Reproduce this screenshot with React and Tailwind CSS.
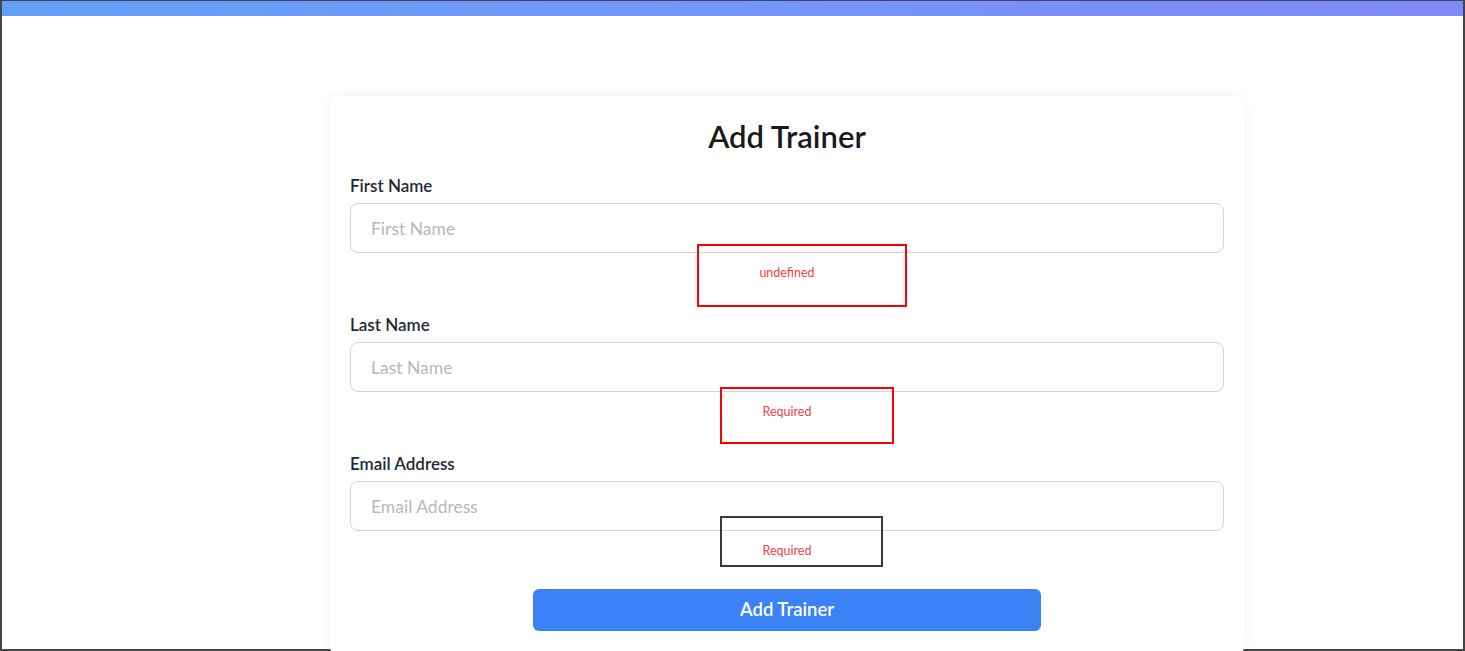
import React from "react";

const font = { fontFamily: "Lato, 'Noto Sans', sans-serif" };

function Field({ label, error }) {
  return (
    <div className="flex flex-col">
      <label className="text-[17px] font-semibold text-[#1f2937] leading-6">{label}</label>
      <input
        placeholder={label}
        className="mt-[5px] h-[50px] w-full rounded-lg border border-[#d4d4d4] px-5 text-[17.5px] text-gray-800 placeholder:text-[#b8b8b8] outline-none"
      />
      <p className="mt-[12px] h-4 text-center text-[12.5px] leading-4 text-[#ef4444]">{error}</p>
    </div>
  );
}

export default function App() {
  return (
    <div className="relative h-[651px] w-[1465px] overflow-hidden bg-white" style={font}>
      <div className="flex h-full flex-col border-x-2 border-b-2 border-t border-[#454545]">
        <div className="h-[15px] shrink-0 bg-gradient-to-r from-[#62a0fa] to-[#7f8af8]" />
        <div className="flex-1 pt-[80px]">
          <div className="ml-[328px] w-[914px] rounded-lg bg-white px-5 pt-[20px] pb-6 shadow-[0_0_12px_rgba(0,0,0,0.06)]">
            <h1 className="text-center text-[31px] font-semibold leading-10 text-[#1a1a1a]">Add Trainer</h1>
            <div className="mt-[18px] flex flex-col gap-[32px]">
              <Field label="First Name" error="undefined" />
              <Field label="Last Name" error="Required" />
              <Field label="Email Address" error="Required" />
            </div>
            <div className="mt-[30px] flex justify-center">
              <button className="h-[42px] w-[508px] rounded-md bg-[#3b82f6] text-[18.5px] font-semibold text-white">
                Add Trainer
              </button>
            </div>
          </div>
        </div>
      </div>
      <div className="pointer-events-none absolute left-[697px] top-[244px] h-[63px] w-[210px] border-2 border-[#ff0000]" />
      <div className="pointer-events-none absolute left-[720px] top-[387px] h-[57px] w-[174px] border-2 border-[#ff0000]" />
      <div className="pointer-events-none absolute left-[720px] top-[516px] h-[51px] w-[163px] border-2 border-[#3a3a3a]" />
    </div>
  );
}
